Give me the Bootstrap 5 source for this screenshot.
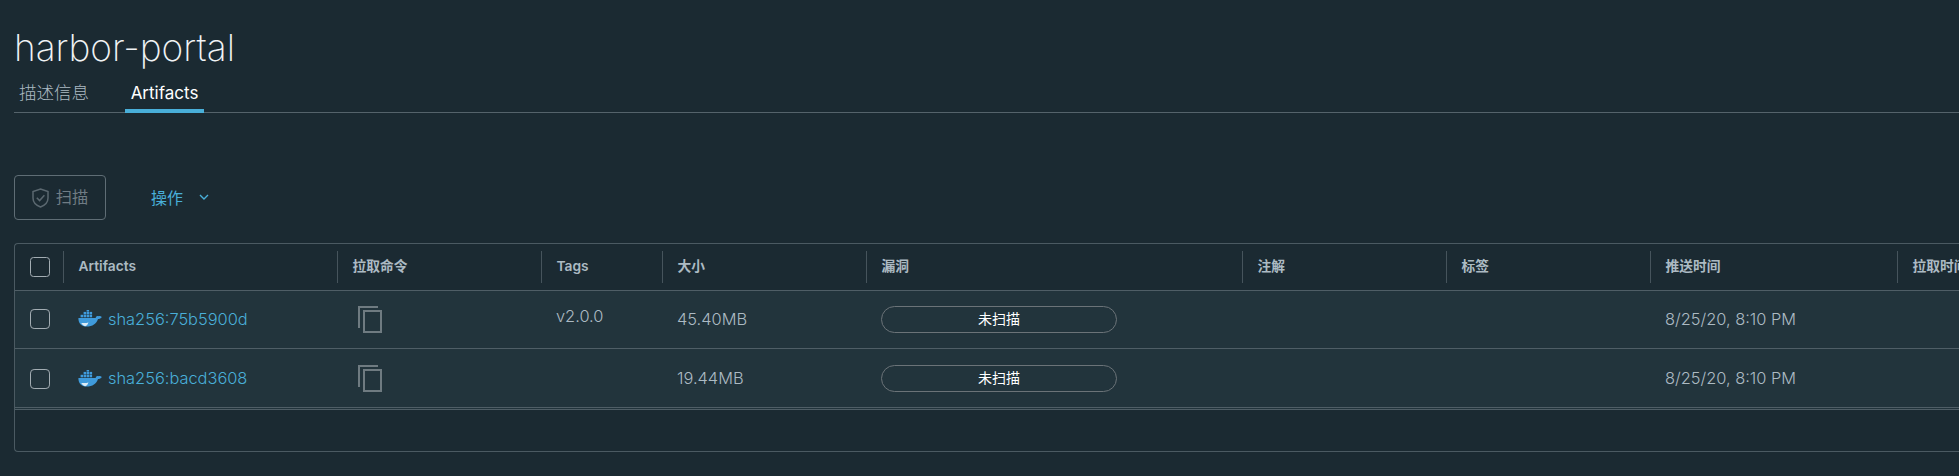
<!DOCTYPE html>
<html lang="zh-CN">
<head>
  <meta charset="UTF-8">
  <title>harbor-portal</title>
  <link href="https://cdn.jsdelivr.net/npm/bootstrap@5.3.3/dist/css/bootstrap.min.css" rel="stylesheet">
  <style>
    html, body { height: 100%; overflow: hidden; }
    body { background: #1b2a32; color: #acbac3; font-family: "Inter", "Noto Sans CJK SC", sans-serif; font-weight: 300; }
    .page-wrap { padding: 27px 0 0 14px; width: 2200px; }
    .repo-title { font-size: 37px; line-height: 42px; font-weight: 200; color: #f0f3f5; margin: 0 0 8px; }

    .repo-tabs { border-bottom: 1px solid #55636b; gap: 31px; height: 36px; width: 1945px; }
    .repo-tabs .nav-link { color: #acbac3; font-size: 17.5px; line-height: 32px; padding: 0 5px; border-bottom: 4px solid transparent; margin-bottom: -1px; height: 36px; }
    .repo-tabs .nav-link.active { color: #fff; font-weight: 400; font-size: 17px; border-bottom-color: #49afd9; padding: 0; width: 79px; text-align: center; }

    .tool-row { margin-top: 62px; margin-bottom: 23px; }
    .scan-btn { width: 92px; height: 45px; border: 1px solid #5f6d75; border-radius: 4px; color: #6f7c84; font-size: 16.25px; gap: 7px; padding: 0; }
    .scan-btn:disabled { border-color: #5f6d75; color: #6f7c84; opacity: 1; }
    .action-btn { color: #49afd9; font-size: 16px; margin-left: 45px; gap: 16px; padding: 0; border: 0; }
    .action-btn:hover { color: #49afd9; }

    .grid-frame { border: 1px solid #4b5a62; border-right: 0; border-radius: 4px 0 0 4px; height: 209px; width: 2200px; }
    .art-table { --bs-table-bg: transparent; --bs-table-color: #acbac3; --bs-table-border-color: #4f5e66; table-layout: fixed; width: 2000px; font-size: 16.4px; }
    .art-table > :not(caption) > * > * { padding: 0; vertical-align: middle; }
    .art-table thead th { height: 46px; font-size: 13.75px; font-weight: 600; color: #acbac3; }
    .head-cell { border-left: 1px solid #46545c; height: 32px; padding-left: 14.5px; display: flex; align-items: center; }
    .art-table tbody tr { --bs-table-bg: #22343c; }
    .art-table tbody td { height: 58px; padding-left: 15px; }
    .art-table tbody tr:last-child td { height: 59px; padding-top: 2px; border-bottom-width: 1px; }
    .rows-end { height: 2px; border-bottom: 1px solid #4f5e66; background: #22343c; }

    .w-c1 { width: 48px; } .w-c2 { width: 274px; } .w-c3 { width: 204px; } .w-c4 { width: 121px; }
    .w-c5 { width: 204px; } .w-c6 { width: 376px; } .w-c7 { width: 204px; } .w-c8 { width: 204px; }
    .w-c9 { width: 247px; } .w-c10 { width: 118px; }

    .pick-box { width: 20px; height: 20px; margin: 0 0 0 15px; display: block; background-color: transparent; border: 1px solid #a3adb3; border-radius: 4px; }
    .sha-link { color: #49afd9; text-decoration: none; gap: 6px; font-size: 16.4px; }
    .tag-text { position: relative; top: -3px; }
    .scan-pill { width: 236px; height: 27px; border: 1px solid #6b7378; border-radius: 14px; color: #fff; font-size: 14px; font-weight: 400; line-height: 24px; text-align: center; }
    .copy-ico { display: block; margin-left: 6px; }
  </style>
</head>
<body>
<div class="page-wrap">
  <h1 class="repo-title">harbor-portal</h1>
  <ul class="nav repo-tabs">
    <li class="nav-item"><a class="nav-link" href="#">描述信息</a></li>
    <li class="nav-item"><a class="nav-link active" href="#">Artifacts</a></li>
  </ul>

  <div class="d-flex align-items-center tool-row">
    <button class="btn scan-btn d-flex align-items-center justify-content-center" disabled>
      <svg width="17" height="20" viewBox="0 0 17 20" fill="none" stroke="#5b6870" stroke-width="1.5">
        <path d="M8.5 1 L16 3.5 V10 C16 14.5 12.5 17.5 8.5 19 C4.5 17.5 1 14.5 1 10 V3.5 Z"/>
        <path d="M4.8 9.8 L7.6 12.6 L12.4 7.2"/>
      </svg>
      <span>扫描</span>
    </button>
    <button class="btn action-btn d-flex align-items-center">
      <span>操作</span>
      <svg width="10" height="7" viewBox="0 0 10 7" fill="none" stroke="#49afd9" stroke-width="1.4"><path d="M1 1 L5 5 L9 1"/></svg>
    </button>
  </div>

  <div class="grid-frame">
    <table class="table art-table mb-0">
      <colgroup>
        <col class="w-c1"><col class="w-c2"><col class="w-c3"><col class="w-c4"><col class="w-c5">
        <col class="w-c6"><col class="w-c7"><col class="w-c8"><col class="w-c9"><col class="w-c10">
      </colgroup>
      <thead>
        <tr>
          <th><input class="form-check-input pick-box" type="checkbox"></th>
          <th><div class="head-cell">Artifacts</div></th>
          <th><div class="head-cell">拉取命令</div></th>
          <th><div class="head-cell">Tags</div></th>
          <th><div class="head-cell">大小</div></th>
          <th><div class="head-cell">漏洞</div></th>
          <th><div class="head-cell">注解</div></th>
          <th><div class="head-cell">标签</div></th>
          <th><div class="head-cell">推送时间</div></th>
          <th><div class="head-cell">拉取时间</div></th>
        </tr>
      </thead>
      <tbody>
        <tr>
          <td class="ps-0"><input class="form-check-input pick-box" type="checkbox"></td>
          <td><a class="sha-link d-flex align-items-center" href="#">
            <svg width="24" height="17" viewBox="0 0 24 17"><use href="#whale"/></svg>sha256:75b5900d</a></td>
          <td><svg class="copy-ico" width="24" height="27" viewBox="0 0 24 27" fill="none" stroke="#6f7b81" stroke-width="2"><use href="#copy"/></svg></td>
          <td><span class="tag-text">v2.0.0</span></td>
          <td>45.40MB</td>
          <td><div class="scan-pill">未扫描</div></td>
          <td></td>
          <td></td>
          <td>8/25/20, 8:10 PM</td>
          <td></td>
        </tr>
        <tr>
          <td class="ps-0"><input class="form-check-input pick-box" type="checkbox"></td>
          <td><a class="sha-link d-flex align-items-center" href="#">
            <svg width="24" height="17" viewBox="0 0 24 17"><use href="#whale"/></svg>sha256:bacd3608</a></td>
          <td><svg class="copy-ico" width="24" height="27" viewBox="0 0 24 27" fill="none" stroke="#6f7b81" stroke-width="2"><use href="#copy"/></svg></td>
          <td></td>
          <td>19.44MB</td>
          <td><div class="scan-pill">未扫描</div></td>
          <td></td>
          <td></td>
          <td>8/25/20, 8:10 PM</td>
          <td></td>
        </tr>
      </tbody>
    </table>
    <div class="rows-end"></div>
  </div>
</div>

<svg width="0" height="0" class="d-block">
  <defs>
    <g id="whale">
      <path fill="#3f9bdc" d="M0.4 8 H17.6 C18 6.2 19.2 5.6 20.2 6.2 C21.4 5.6 23 6 23.8 6.9 C23 8.4 21.4 9 20 9 C18.4 13.6 14.6 16.6 8.6 16.6 C3.4 16.6 0.2 13 0.4 8 Z"/>
      <path fill="#dcecf7" d="M3.2 13 C6 13 8.4 13.4 10.4 12.2 C10 14.6 8.6 15.8 7.2 16.3 C5.4 15.8 4 14.6 3.2 13 Z"/>
      <g fill="#3f9bdc">
        <rect x="2.6" y="4.8" width="2.5" height="2.5"/><rect x="5.6" y="4.8" width="2.5" height="2.5"/><rect x="8.6" y="4.8" width="2.5" height="2.5"/><rect x="11.6" y="4.8" width="2.5" height="2.5"/>
        <rect x="5.6" y="1.9" width="2.5" height="2.5"/><rect x="8.6" y="1.9" width="2.5" height="2.5"/><rect x="11.6" y="1.9" width="2.5" height="2.5"/>
        <rect x="8.6" y="0" width="2.5" height="1.6"/>
      </g>
    </g>
    <g id="copy">
      <path d="M20 1 H1 V22"/>
      <rect x="6" y="5" width="17" height="21"/>
    </g>
  </defs>
</svg>
</body>
</html>
